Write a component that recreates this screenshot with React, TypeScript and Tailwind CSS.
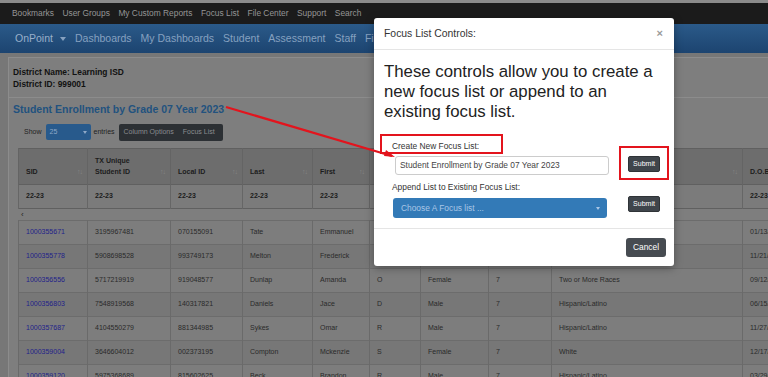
const topLinks = ["Bookmarks", "User Groups", "My Custom Reports", "Focus List", "File Center", "Support", "Search"];
const mainLinks = ["Dashboards", "My Dashboards", "Student", "Assessment", "Staff", "Filters"];

const cols = [
  { w: 69, label: ["SID"] },
  { w: 83, label: ["TX Unique", "Student ID"] },
  { w: 72, label: ["Local ID"] },
  { w: 70, label: ["Last"] },
  { w: 57, label: ["First"] },
  { w: 51, label: ["MI"] },
  { w: 68, label: ["Sex"] },
  { w: 63, label: ["Gr"] },
  { w: 191, label: ["Ethnicity"] },
  { w: 80, label: ["D.O.B"] },
];

const rows = [
  ["1000355671", "3195967481", "070155091", "Tate", "Emmanuel", "J", "Male", "7", "Black", "01/13/2010"],
  ["1000355778", "5908698528", "993749173", "Melton", "Frederick", "A", "Male", "7", "White", "11/21/2010"],
  ["1000356556", "5717219919", "919048577", "Dunlap", "Amanda", "O", "Female", "7", "Two or More Races", "09/12/2010"],
  ["1000356803", "7548919568", "140317821", "Daniels", "Jace", "D", "Male", "7", "Hispanic/Latino", "06/15/2010"],
  ["1000357687", "4104550279", "881344985", "Sykes", "Omar", "R", "Male", "7", "Hispanic/Latino", "11/27/2010"],
  ["1000359004", "3646604012", "002373195", "Compton", "Mckenzie", "S", "Female", "7", "White", "12/17/2010"],
  ["1000359120", "5975368689", "815602625", "Beck", "Brandon", "R", "Male", "7", "Hispanic/Latino", "03/29/2010"],
];

function ColGroup() {
  return (
    <colgroup>
      {cols.map((c, i) => (
        <col key={i} style={{ width: c.w }} />
      ))}
    </colgroup>
  );
}

export default function App() {
  return (
    <div className="relative w-[768px] h-[377px] overflow-hidden bg-[#777777] font-['Liberation_Sans',Arial,sans-serif]">
      <div className="h-[3px] bg-[#8b8b8b]" />
      <nav className="h-[21px] bg-[#1b1b1b] flex items-center pl-[12px] gap-[8.5px] text-[8.4px] text-[#959595]">
        {topLinks.map((l) => (
          <span key={l}>{l}</span>
        ))}
      </nav>
      <nav className="h-[29px] bg-gradient-to-b from-[#2b5a89] to-[#1c4470] flex items-center pl-[15px] gap-[9px] text-[10.5px] text-[#86a1c0] whitespace-nowrap">
        <span className="flex items-center text-[#98afca]">
          OnPoint
          <svg width="6" height="4" viewBox="0 0 6 4" className="ml-[7px]">
            <path d="M0 0h6L3 4z" fill="#86a1c0" />
          </svg>
        </span>
        {mainLinks.map((l) => (
          <span key={l}>{l}</span>
        ))}
      </nav>

      <div className="ml-[8px] mt-[4px] border-l border-t border-[#8c8c8c] bg-[#7e7e7e] h-[330px]">
        <div className="h-[40px] pl-[4px] flex flex-col justify-center gap-[2px] border-b border-[#8c8c8c] text-[8.4px] font-bold leading-[10px] text-[#111]">
          <div>District Name: Learning ISD</div>
          <div>District ID: 999001</div>
        </div>
        <h2 className="pl-[4px] pt-[4px] text-[10.5px] leading-[14px] font-bold text-[#22527f]">
          Student Enrollment by Grade 07 Year 2023
        </h2>
        <div className="mt-[8px] pl-[15px] flex items-center h-[16px] text-[7px] text-[#222]">
          <span>Show</span>
          <div className="ml-[4px] w-[45px] h-[16px] bg-[#285a8c] rounded-[2px] flex items-center justify-between px-[4px] text-[#8fa9c7]">
            <span>25</span>
            <svg width="4" height="3" viewBox="0 0 4 3">
              <path d="M0 0h4L2 3z" fill="#8fa9c7" />
            </svg>
          </div>
          <span className="ml-[3px]">entries</span>
          <div className="ml-[4px] h-[17px] w-[104px] bg-[#2c3034] rounded-[2px] flex items-center gap-[9px] pl-[5px] text-[#8a8c8f]">
            <span>Column Options</span>
            <span>Focus List</span>
          </div>
        </div>

        <div className="mt-[8px] ml-[9px]">
          <table className="table-fixed border-collapse w-[804px] text-[7px] text-[#1c1c1c]">
            <ColGroup />
            <thead>
              <tr className="h-[36px] bg-[#6d6d6d] border-t border-[#606060]">
                {cols.map((c, i) => (
                  <th key={i} className="border-x border-[#646464] align-bottom pl-[7px] pr-[5px] pb-[7px] text-left font-bold leading-[11px]">
                    <div className="flex items-end justify-between">
                      <div>
                        {c.label.map((t) => (
                          <div key={t}>{t}</div>
                        ))}
                      </div>
                      <span className="text-[#858585] font-normal tracking-[-1px] text-[7px]">↑↓</span>
                    </div>
                  </th>
                ))}
              </tr>
              <tr className="h-[24px] bg-[#7b7b7b] border-y border-[#606060]">
                {cols.map((_, i) => (
                  <th key={i} className="border-x border-[#666666] pl-[7px] text-left font-bold">
                    22-23
                  </th>
                ))}
              </tr>
            </thead>
          </table>
          <div className="h-[11px] pl-[3px] text-[8px] leading-[11px] text-[#222]">‹</div>
          <table className="table-fixed border-collapse w-[804px] text-[7px] text-[#2a2a2a]">
            <ColGroup />
            <tbody>
              {rows.map((r, ri) => (
                <tr key={ri} className={`h-[24px] border-y border-[#6c6c6c] ${ri % 2 === 0 ? "bg-[#7d7d7d]" : "bg-[#777777]"}`}>
                  {r.map((v, ci) => (
                    <td
                      key={ci}
                      className={`border-x border-[#6a6a6a] pl-[7px] whitespace-nowrap overflow-hidden ${ci === 0 ? "text-[#22228a]" : ""}`}
                    >
                      {v}
                    </td>
                  ))}
                </tr>
              ))}
            </tbody>
          </table>
        </div>
      </div>

      {/* modal */}
      <div className="absolute left-[374px] top-[18px] w-[300px] h-[248px] bg-white rounded-[3px] shadow-[0_2px_8px_rgba(0,0,0,0.35)] flex flex-col text-[#333]">
        <div className="h-[32px] px-[10px] flex items-center justify-between border-b border-[#e5e5e5]">
          <span className="text-[10.4px]">Focus List Controls:</span>
          <span className="text-[11px] font-bold text-[#9a9a9a] mr-[1px]">×</span>
        </div>
        <div className="px-[10px] pt-[12px] pb-[10px] border-b border-[#e5e5e5]">
          <h3 className="text-[16.8px] leading-[20px] text-[#222]">
            These controls allow you to create a new focus list or append to an existing focus list.
          </h3>
          <div className="mt-[19px] flex items-start">
            <div className="ml-[8px] w-[217px]">
              <div className="text-[8.4px] leading-[10px]">Create New Focus List:</div>
              <div className="mt-[5px] ml-[3px] w-[214px] h-[19px] border border-[#cccccc] rounded-[3px] flex items-center pl-[4px] text-[8.4px] text-[#444]">
                Student Enrollment by Grade 07 Year 2023
              </div>
            </div>
            <button className="ml-[19px] mt-[15px] w-[32px] h-[16px] bg-[#3f454b] border border-[#2f3337] rounded-[2px] text-[7px] text-white">
              Submit
            </button>
          </div>
          <div className="mt-[7px] flex items-start">
            <div className="ml-[8px] w-[217px]">
              <div className="text-[8.4px] leading-[10px]">Append List to Existing Focus List:</div>
              <div className="mt-[6px] ml-[1px] w-[214px] h-[20px] bg-[#337ab7] rounded-[3px] flex items-center justify-between pl-[8px] pr-[7px] text-[8.4px] text-[#a9c6e6]">
                <span>Choose A Focus list ...</span>
                <svg width="4" height="3" viewBox="0 0 4 3">
                  <path d="M0 0h4L2 3z" fill="#a9c6e6" />
                </svg>
              </div>
            </div>
            <button className="ml-[19px] mt-[14px] w-[32px] h-[16px] bg-[#3f454b] border border-[#2f3337] rounded-[2px] text-[7px] text-white">
              Submit
            </button>
          </div>
        </div>
        <div className="flex justify-end pt-[9px] pr-[8px]">
          <button className="w-[40px] h-[19px] bg-[#464b51] rounded-[3px] text-[8.4px] text-white">Cancel</button>
        </div>
      </div>

      {/* annotations */}
      <svg className="absolute inset-0 pointer-events-none" width="768" height="377">
        <line x1="226" y1="107" x2="392" y2="156" stroke="#e3141d" strokeWidth="2.2" />
        <path d="M395 157 L386 150 L384 156 Z" fill="#e3141d" />
        <rect x="381" y="135" width="121" height="18" fill="none" stroke="#e3141d" strokeWidth="2" />
        <rect x="620" y="147" width="48" height="32" fill="none" stroke="#e3141d" strokeWidth="2" />
      </svg>
    </div>
  );
}
